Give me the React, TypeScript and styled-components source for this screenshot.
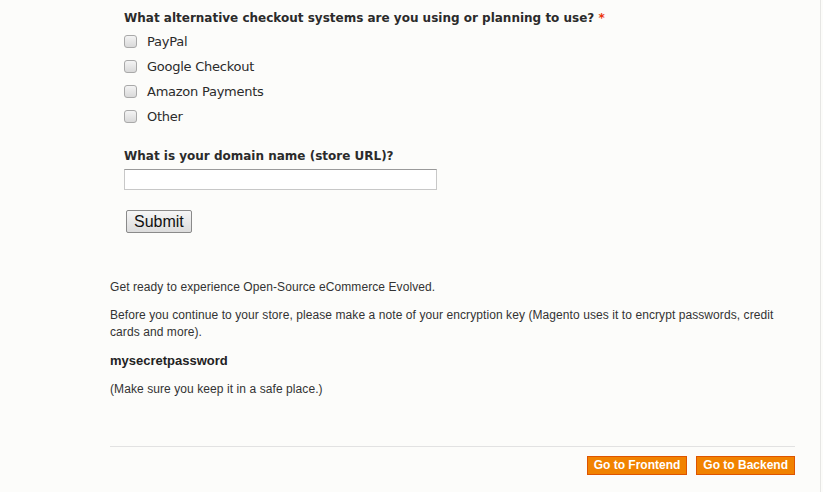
import styled, { createGlobalStyle } from 'styled-components';

const GlobalStyle = createGlobalStyle`
  html, body {
    margin: 0;
    padding: 0;
    background: #fcfcfa;
  }
`;

const Page = styled.div`
  width: 821px;
  min-height: 492px;
  border-right: 1px solid #e6e6e4;
  box-sizing: border-box;
`;

const Content = styled.div`
  width: 685px;
  margin-left: 110px;
  padding-top: 11px;
`;

const Form = styled.form`
  padding-left: 14px;
  font-family: 'DejaVu Sans', Verdana, sans-serif;
  color: #2b2b2b;
`;

const Label = styled.div`
  font-size: 12px;
  font-weight: bold;
  line-height: 15px;
`;

const Required = styled.span`
  color: #eb340a;
`;

const Options = styled.ul`
  list-style: none;
  margin: 3px 0 0;
  padding: 0;
`;

const Option = styled.li`
  display: flex;
  align-items: center;
  height: 25px;
  font-size: 13px;
  letter-spacing: -0.25px;
`;

const Check = styled.input`
  appearance: none;
  width: 13px;
  height: 13px;
  margin: 0 10px 0 0;
  border: 1px solid #a9a9a9;
  border-radius: 3px;
  background: linear-gradient(#f4f4f4, #d9d9d9);
  box-sizing: border-box;

  &:checked {
    background: #8ab4e8;
  }
`;

const Field = styled.div`
  margin-top: 20px;
`;

const TextInput = styled.input`
  display: block;
  margin-top: 5px;
  width: 313px;
  height: 21px;
  box-sizing: border-box;
  border: 1px solid #c8c8c8;
  border-top-color: #9a9a9a;
  background: #fff;
`;

const SubmitButton = styled.button`
  margin: 20px 0 0 2px;
  height: 23px;
  padding: 0 7px;
  font-family: 'Liberation Sans', Arial, sans-serif;
  font-size: 16px;
  color: #111;
  border: 1px solid #8a8a8a;
  border-radius: 2px;
  background: linear-gradient(#f6f6f6, #dcdcdc);
`;

const Info = styled.div`
  margin-top: 46px;
  font-family: 'Liberation Sans', Arial, sans-serif;
  font-size: 12px;
  line-height: 17px;
  letter-spacing: 0.08px;
  color: #333;
`;

const Para = styled.p`
  margin: 0 0 11px;
`;

const Key = styled.p`
  margin: 0 0 12px;
  font-size: 13px;
  font-weight: bold;
  letter-spacing: 0;
  color: #222;
`;

const Footer = styled.div`
  margin-top: 48px;
  border-top: 1px solid #e2e2e2;
  padding-top: 9px;
  display: flex;
  justify-content: flex-end;
  gap: 9px;
`;

const OrangeButton = styled.button`
  height: 19px;
  padding: 0 6px;
  font-family: 'Liberation Sans', Arial, sans-serif;
  font-size: 12px;
  font-weight: bold;
  color: #fff;
  background: #f18200;
  border: 1px solid #de5400;
  border-radius: 0;
  line-height: 17px;
`;

const options = ['PayPal', 'Google Checkout', 'Amazon Payments', 'Other'];

export default function App() {
  return (
    <Page>
      <GlobalStyle />
      <Content>
        <Form onSubmit={(e) => e.preventDefault()}>
          <Label>
            What alternative checkout systems are you using or planning to use? <Required>*</Required>
          </Label>
          <Options>
            {options.map((o) => (
              <Option key={o}>
                <Check type="checkbox" />
                {o}
              </Option>
            ))}
          </Options>
          <Field>
            <Label>What is your domain name (store URL)?</Label>
            <TextInput type="text" />
          </Field>
          <SubmitButton type="submit">Submit</SubmitButton>
        </Form>
        <Info>
          <Para>Get ready to experience Open-Source eCommerce Evolved.</Para>
          <Para>
            Before you continue to your store, please make a note of your encryption key (Magento uses it to encrypt passwords, credit cards and more).
          </Para>
          <Key>mysecretpassword</Key>
          <Para>(Make sure you keep it in a safe place.)</Para>
        </Info>
        <Footer>
          <OrangeButton type="button">Go to Frontend</OrangeButton>
          <OrangeButton type="button">Go to Backend</OrangeButton>
        </Footer>
      </Content>
    </Page>
  );
}
